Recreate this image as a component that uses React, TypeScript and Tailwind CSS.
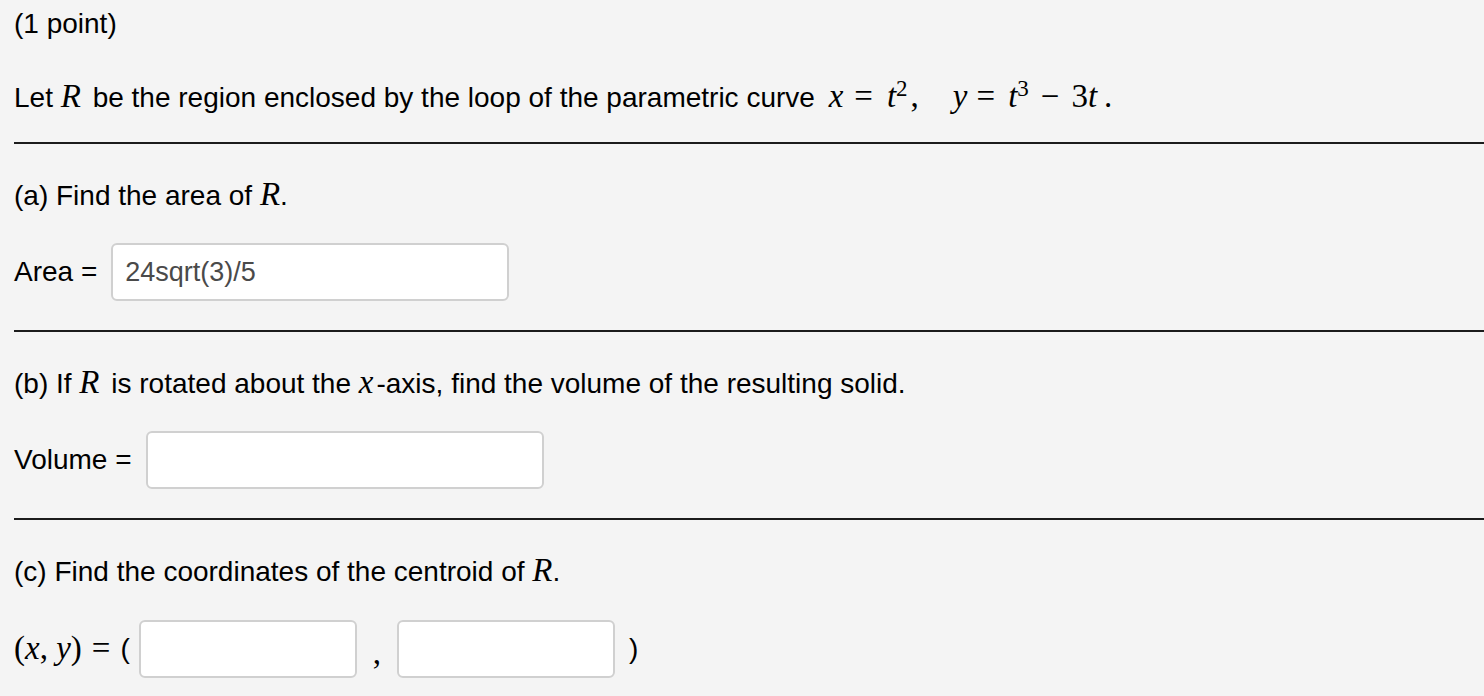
import type { FC, ReactNode } from 'react'

const serif = "font-['Liberation_Serif',serif]"

const M: FC<{ children: ReactNode; className?: string }> = ({ children, className }) => (
  <span className={`${serif} text-[33px] italic ${className ?? ''}`}>{children}</span>
)

const Op: FC<{ children: ReactNode; className?: string }> = ({ children, className }) => (
  <span className={`${serif} text-[33px] ${className ?? ''}`}>{children}</span>
)

const Rule = () => <div className="h-[2px] w-full bg-[#1c1c1c]" />

const Box: FC<{ width: string; value?: string }> = ({ width, value }) => (
  <input
    readOnly
    value={value ?? ''}
    className={`${width} h-[58px] rounded-[6px] border-2 border-[#d0d0d0] bg-white px-[12px] font-['Liberation_Sans',Arial,sans-serif] text-[27px] text-[#4a4a4a] outline-none`}
  />
)

export default function App() {
  return (
    <div className="min-h-[696px] overflow-hidden bg-[#f4f4f4] pl-[14px] font-['Liberation_Sans',Arial,sans-serif] text-[28px] text-black">
      <div className="pt-[9px] leading-[30px]">(1 point)</div>
      <div className="mt-[42px] h-[30px] whitespace-nowrap leading-[30px]">
        Let <M className="mr-[4px]">R</M> be the region enclosed by the loop of the parametric curve{' '}
        <M className="ml-[6px]">x</M>
        <Op className="ml-[11px] mr-[14px]">=</Op>
        <M>t</M>
        <sup className={`${serif} text-[23px]`}>2</sup>
        <Op className="ml-[3px] mr-[34px]">,</Op>
        <M>y</M>
        <Op className="ml-[9px] mr-[13px]">=</Op>
        <M>t</M>
        <sup className={`${serif} text-[23px]`}>3</sup>
        <Op className="ml-[12px] mr-[12px]">−</Op>
        <Op>3</Op>
        <M>t</M>
        <Op className="ml-[7px]">.</Op>
      </div>
      <div className="mt-[31px]">
        <Rule />
      </div>

      <div className="mt-[35px] h-[30px] leading-[30px]">
        (a) Find the area of <M>R</M>.
      </div>
      <div className="mt-[34px] flex items-center gap-[14px]">
        <span>Area =</span>
        <Box width="w-[398px]" value="24sqrt(3)/5" />
      </div>
      <div className="mt-[29px]">
        <Rule />
      </div>

      <div className="mt-[35px] h-[30px] whitespace-nowrap leading-[30px]">
        (b) If <M className="mr-[4px]">R</M> is rotated about the <M className="mr-[3px]">x</M>-axis, find the volume of the resulting solid.
      </div>
      <div className="mt-[34px] flex items-center gap-[14px]">
        <span>Volume =</span>
        <Box width="w-[398px]" />
      </div>
      <div className="mt-[29px]">
        <Rule />
      </div>

      <div className="mt-[35px] h-[30px] leading-[30px]">
        (c) Find the coordinates of the centroid of <M>R</M>.
      </div>
      <div className="mt-[34px] flex items-center">
        <Op>
          (<i>x</i>, <i>y</i>)
        </Op>
        <Op className="mx-[10px]">=</Op>
        <span>(</span>
        <span className="ml-[9px]">
          <Box width="w-[218px]" />
        </span>
        <Op className="mx-[16px] mt-[10px]">,</Op>
        <span>
          <Box width="w-[218px]" />
        </span>
        <span className="ml-[14px]">)</span>
      </div>
    </div>
  )
}
